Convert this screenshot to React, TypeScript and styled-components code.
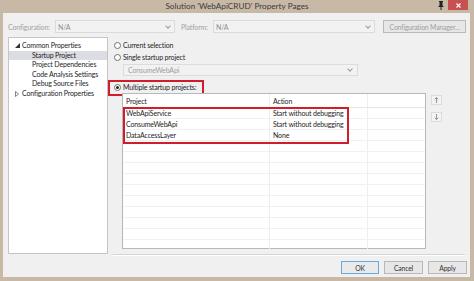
import styled, { createGlobalStyle } from 'styled-components';

const GlobalStyle = createGlobalStyle`
  html, body {
    margin: 0;
    padding: 0;
    background: #c8b9a6;
  }
  * {
    box-sizing: border-box;
  }
`;

const FONT = `Lato, "Open Sans", "Liberation Sans", sans-serif`;
const RED = '#cf1d2c';

type TreeItem = { label: string; level: number; expander?: 'open' | 'closed'; selected?: boolean };

const TREE: TreeItem[] = [
  { label: 'Common Properties', level: 0, expander: 'open' },
  { label: 'Startup Project', level: 1, selected: true },
  { label: 'Project Dependencies', level: 1 },
  { label: 'Code Analysis Settings', level: 1 },
  { label: 'Debug Source Files', level: 1 },
  { label: 'Configuration Properties', level: 0, expander: 'closed' },
];

const PROJECTS = [
  { name: 'WebApiService', action: 'Start without debugging' },
  { name: 'ConsumeWebApi', action: 'Start without debugging' },
  { name: 'DataAccessLayer', action: 'None' },
];

const EMPTY_ROWS = 10;

export default function App() {
  return (
    <>
      <GlobalStyle />
      <Window>
        <TitleBar>
          <Title>Solution 'WebApiCRUD' Property Pages</Title>
          <Controls>
            <svg width="6" height="9" viewBox="0 0 6 9">
              <path d="M1 0h4v1H4.5v3.5L6 6H3.5v3h-1V6H0l1.5-1.5V1H1z" fill="#222" />
            </svg>
            <CloseButton>
              <svg width="5" height="5" viewBox="0 0 5 5">
                <path d="M0.5 0.5l4 4M4.5 0.5l-4 4" stroke="#fff" strokeWidth="1.1" />
              </svg>
            </CloseButton>
          </Controls>
        </TitleBar>

        <Body>
          <ConfigRow>
            <Label $width={47}>Configuration:</Label>
            <Combo $width={120}>
              <span>N/A</span>
              <Chevron />
            </Combo>
            <Label $width={32} $indent={6}>Platform:</Label>
            <Combo $width={162}>
              <span>N/A</span>
              <Chevron />
            </Combo>
            <Button $width={83} $muted $indent={8}>
              Configuration Manager...
            </Button>
          </ConfigRow>

          <Main>
            <Tree>
              {TREE.map((item) => (
                <TreeRow key={item.label} $level={item.level} $selected={item.selected}>
                  <Expander>
                    {item.expander === 'open' && (
                      <svg width="5" height="5" viewBox="0 0 5 5">
                        <path d="M5 0V5H0z" fill="#333" />
                      </svg>
                    )}
                    {item.expander === 'closed' && (
                      <svg width="4" height="6" viewBox="0 0 4 6">
                        <path d="M0.5 0.5L3.5 3L0.5 5.5z" fill="none" stroke="#666" strokeWidth="0.8" />
                      </svg>
                    )}
                  </Expander>
                  {item.label}
                </TreeRow>
              ))}
            </Tree>

            <Content>
              <RadioRow>
                <Radio />
                Current selection
              </RadioRow>
              <RadioRow>
                <Radio />
                Single startup project
              </RadioRow>
              <StartupCombo>
                <span>ConsumeWebApi</span>
                <Chevron />
              </StartupCombo>
              <RadioRow $gapTop={5}>
                <Radio $checked />
                Multiple startup projects:
                <Annotation $left={-5} $top={-1} $width={96} $height={16} />
              </RadioRow>

              <GridArea>
                <Grid>
                  <GridHeader>
                    <Cell $width={147}>Project</Cell>
                    <Cell $width={98}>Action</Cell>
                    <Cell $width={57} />
                  </GridHeader>
                  {PROJECTS.map((p) => (
                    <GridRow key={p.name}>
                      <Cell $width={147}>{p.name}</Cell>
                      <Cell $width={98}>{p.action}</Cell>
                      <Cell $width={57} />
                    </GridRow>
                  ))}
                  {Array.from({ length: EMPTY_ROWS }).map((_, i) => (
                    <GridRow key={i}>
                      <Cell $width={147} />
                      <Cell $width={98} />
                      <Cell $width={57} />
                    </GridRow>
                  ))}
                  <Annotation $left={0} $top={13} $width={226} $height={37} />
                </Grid>
                <MoveButtons>
                  <MoveButton>
                    <svg width="5" height="6" viewBox="0 0 5 6">
                      <path d="M2.5 0.5V6M0.7 2.3L2.5 0.5L4.3 2.3" fill="none" stroke="#8a8a8a" strokeWidth="0.9" />
                    </svg>
                  </MoveButton>
                  <MoveButton>
                    <svg width="5" height="6" viewBox="0 0 5 6">
                      <path d="M2.5 0V5.5M0.7 3.7L2.5 5.5L4.3 3.7" fill="none" stroke="#8a8a8a" strokeWidth="0.9" />
                    </svg>
                  </MoveButton>
                </MoveButtons>
              </GridArea>

              <Separator />
            </Content>
          </Main>

          <Footer>
            <Button $width={38} $default>OK</Button>
            <Button $width={39}>Cancel</Button>
            <Button $width={39}>Apply</Button>
          </Footer>
        </Body>
      </Window>
    </>
  );
}

const Window = styled.div`
  width: 474px;
  height: 281px;
  background: #c8b9a6;
  display: flex;
  flex-direction: column;
  font-family: ${FONT};
  font-size: 7px;
  letter-spacing: -0.15px;
  color: #1e1e1e;
  overflow: hidden;
`;

const TitleBar = styled.div`
  position: relative;
  height: 13px;
  flex-shrink: 0;
`;

const Title = styled.div`
  font-size: 8.2px;
  letter-spacing: 0;
  line-height: 12px;
  color: #3a3a3a;
  text-align: center;
`;

const Controls = styled.div`
  position: absolute;
  top: 0;
  right: 6px;
  display: flex;
  align-items: flex-start;
  gap: 4px;

  & > svg {
    margin-top: 1px;
  }
`;

const CloseButton = styled.div`
  width: 20px;
  height: 10px;
  flex-shrink: 0;
  background: #c75050;
  display: flex;
  align-items: center;
  justify-content: center;
`;

const Body = styled.div`
  flex: 1;
  margin: 0 4px 4px 3px;
  background: #f0f0f0;
  display: flex;
  flex-direction: column;
`;

const ConfigRow = styled.div`
  display: flex;
  align-items: center;
  height: 13px;
  margin-top: 7px;
  padding-left: 5px;
  color: #a2a2a2;
`;

const Label = styled.span<{ $width: number; $indent?: number }>`
  width: ${(p) => p.$width}px;
  margin-left: ${(p) => p.$indent ?? 0}px;
`;

const Combo = styled.div<{ $width: number }>`
  width: ${(p) => p.$width}px;
  height: 13px;
  border: 1px solid #dadada;
  background: #f2f2f2;
  display: flex;
  align-items: center;
  justify-content: space-between;
  padding: 0 4px 0 2px;
  color: #8e8e8e;
`;

const Chevron = styled.span`
  width: 4px;
  height: 4px;
  border-right: 1px solid #9a9a9a;
  border-bottom: 1px solid #9a9a9a;
  transform: translateY(-1px) rotate(45deg);
`;

const Button = styled.div<{ $width: number; $default?: boolean; $muted?: boolean; $indent?: number }>`
  width: ${(p) => p.$width}px;
  height: 13px;
  flex-shrink: 0;
  margin-left: ${(p) => p.$indent ?? 0}px;
  border: 1px solid ${(p) => (p.$default ? '#6ea6d6' : '#b8b8b8')};
  background: ${(p) => (p.$default ? '#e8ebee' : '#e7e7e7')};
  color: ${(p) => (p.$muted ? '#a0a0a0' : '#333')};
  font-size: 6.8px;
  display: flex;
  align-items: center;
  justify-content: center;
  white-space: nowrap;
`;

const Main = styled.div`
  display: flex;
  margin-top: 4px;
  height: 219px;
`;

const Tree = styled.div`
  width: 100px;
  margin: 0 0 2px 5px;
  border: 1px solid #c5c5c5;
  background: #fff;
  padding-top: 3px;
`;

const TreeRow = styled.div<{ $level: number; $selected?: boolean }>`
  height: 9.6px;
  line-height: 9.6px;
  display: flex;
  align-items: center;
  padding-left: ${(p) => 3 + p.$level * 10}px;
  background: ${(p) => (p.$selected ? '#dcdde3' : 'transparent')};
  white-space: nowrap;
`;

const Expander = styled.span`
  width: 10px;
  display: inline-flex;
  align-items: center;
  justify-content: center;
`;

const Content = styled.div`
  flex: 1;
  margin: 0 5px;
  padding-top: 2px;
  display: flex;
  flex-direction: column;
`;

const RadioRow = styled.div<{ $gapTop?: number }>`
  position: relative;
  height: 12px;
  margin-top: ${(p) => p.$gapTop ?? 0}px;
  display: flex;
  align-items: center;
  gap: 2px;
  padding-left: 1px;
  white-space: nowrap;
`;

const Radio = styled.span<{ $checked?: boolean }>`
  width: 7px;
  height: 7px;
  border-radius: 50%;
  border: 1px solid #707070;
  background: #fff;
  display: inline-flex;
  align-items: center;
  justify-content: center;

  &::after {
    content: '';
    width: 3px;
    height: 3px;
    border-radius: 50%;
    background: ${(p) => (p.$checked ? '#222' : 'transparent')};
  }
`;

const StartupCombo = styled.div`
  width: 235px;
  height: 12px;
  margin: 1px 0 0 10px;
  border: 1px solid #dcdcdc;
  background: #f2f2f2;
  display: flex;
  align-items: center;
  justify-content: space-between;
  padding: 0 5px 0 4px;
  color: #a0a0a0;
`;

const Annotation = styled.div<{ $left: number; $top: number; $width: number; $height: number }>`
  position: absolute;
  left: ${(p) => p.$left}px;
  top: ${(p) => p.$top}px;
  width: ${(p) => p.$width}px;
  height: ${(p) => p.$height}px;
  border: 2px solid ${RED};
  pointer-events: none;
`;

const GridArea = styled.div`
  display: flex;
  align-items: flex-start;
  margin-left: 9px;
`;

const Grid = styled.div`
  position: relative;
  width: 304px;
  height: 156px;
  border: 1px solid #b8b8b8;
  background: #fff;
`;

const GridHeader = styled.div`
  display: flex;
  height: 14px;
  border-bottom: 1px solid #e6e6e6;
`;

const GridRow = styled.div`
  display: flex;
  height: 11px;
  border-bottom: 1px solid #f1f1f1;
`;

const Cell = styled.div<{ $width: number }>`
  width: ${(p) => p.$width}px;
  height: 100%;
  padding-left: 3px;
  display: flex;
  align-items: center;
  border-right: 1px solid #eeeeee;
  white-space: nowrap;
  overflow: hidden;
  &:last-child {
    border-right: none;
  }
`;

const MoveButtons = styled.div`
  display: flex;
  flex-direction: column;
  gap: 7px;
  margin: 2px 0 0 5px;
`;

const MoveButton = styled.div`
  width: 11px;
  height: 10px;
  border: 1px solid #dcdcdc;
  background: #f3f3f3;
  display: flex;
  align-items: center;
  justify-content: center;
`;

const Separator = styled.div`
  margin-top: auto;
  height: 2px;
  border-top: 1px solid #d5d5d5;
  border-bottom: 1px solid #fff;
`;

const Footer = styled.div`
  display: flex;
  justify-content: flex-end;
  gap: 5px;
  margin-top: 5px;
  padding-right: 3px;
`;
